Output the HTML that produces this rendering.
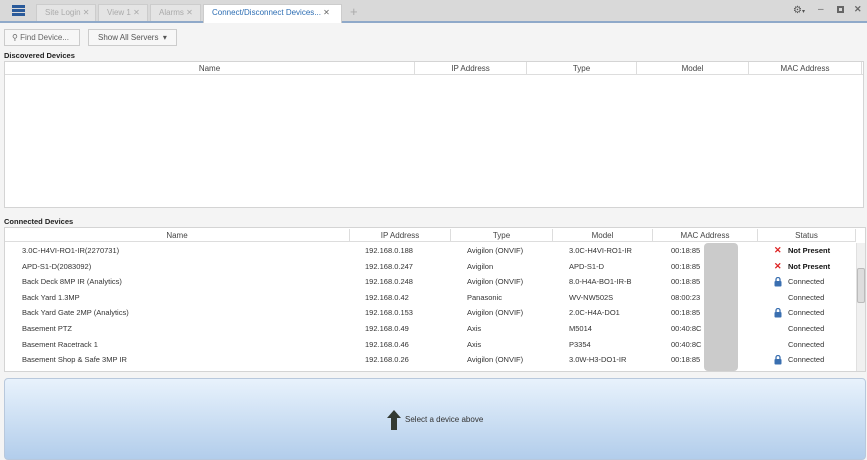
<!DOCTYPE html>
<html><head><meta charset="utf-8"><style>
*{margin:0;padding:0;box-sizing:border-box}
body{width:867px;height:460px;overflow:hidden;background:#f4f4f4;font-family:"Liberation Sans",sans-serif;font-size:8px;color:#333;position:relative}
.a{position:absolute;white-space:nowrap}
.tab{position:absolute;top:4px;height:17px;background:#e4e4e4;border:1px solid #ccc;border-bottom:none;color:#aaa;font-size:8px;line-height:16px;padding-left:8px}
.hd{position:absolute;height:13px;background:#fff;border-bottom:1px solid #ddd}
.hc{position:absolute;top:0;height:13px;border-right:1px solid #ddd;text-align:center;line-height:13px;color:#444;font-size:8px}
.row{position:absolute;left:0;width:851px;height:15px;line-height:15px;font-size:7.5px;color:#333}
.row span{position:absolute}
.lk{position:absolute;left:769px;top:3px}
</style></head><body>
<div class="a" style="left:0;top:0;width:867px;height:21px;background:#d9d9d9"></div>
<div class="a" style="left:0;top:21px;width:867px;height:2px;background:#8fa9c9"></div>
<div class="a" style="left:12px;top:5px;width:13px;height:3px;background:#2a5a9a;box-shadow:0 4px 0 #2a5a9a,0 8px 0 #2a5a9a"></div>
<div class="tab" style="left:36px;width:60px">Site Login ✕</div>
<div class="tab" style="left:98px;width:50px">View 1 ✕</div>
<div class="tab" style="left:150px;width:51px">Alarms ✕</div>
<div class="tab" style="left:203px;width:139px;background:#fff;color:#2c6db3;height:19px">Connect/Disconnect Devices... <span style="color:#666">✕</span></div>
<div class="a" style="left:350px;top:4px;color:#aaa;font-size:13px">+</div>
<div class="a" style="left:793px;top:5px;font-size:10px;color:#555">⚙<span style="font-size:6px">▾</span></div>
<div class="a" style="left:818px;top:4px;font-size:10px;color:#666">–</div>
<div class="a" style="left:837px;top:6px;width:7px;height:7px;border:2px solid #666"></div>
<div class="a" style="left:854px;top:4px;font-size:9px;color:#666;font-weight:bold">✕</div>

<div class="a" style="left:4px;top:29px;width:76px;height:17px;border:1px solid #ccc;background:#f7f7f7;line-height:15px;padding-left:7px;color:#666">⚲ Find Device...</div>
<div class="a" style="left:88px;top:29px;width:89px;height:17px;border:1px solid #ccc;background:#f7f7f7;line-height:15px;padding-left:9px;color:#555">Show All Servers &nbsp;▾</div>
<div class="a" style="left:4px;top:51px;font-weight:bold;font-size:7.5px;color:#222">Discovered Devices</div>
<div class="a" style="left:4px;top:61px;width:860px;height:147px;background:#fff;border:1px solid #d4d4d4"></div>
<div class="hd" style="left:5px;top:62px;width:858px">
<div class="hc" style="left:0;width:410px">Name</div>
<div class="hc" style="left:410px;width:112px">IP Address</div>
<div class="hc" style="left:522px;width:110px">Type</div>
<div class="hc" style="left:632px;width:112px">Model</div>
<div class="hc" style="left:744px;width:113px">MAC Address</div></div>

<div class="a" style="left:4px;top:217px;font-weight:bold;font-size:7.5px;color:#222">Connected Devices</div>
<div class="a" style="left:4px;top:227px;width:862px;height:145px;background:#fff;border:1px solid #d4d4d4;overflow:hidden">
<div class="hd" style="left:0;top:1px;width:851px">
<div class="hc" style="left:0;width:345px">Name</div>
<div class="hc" style="left:345px;width:101px">IP Address</div>
<div class="hc" style="left:446px;width:102px">Type</div>
<div class="hc" style="left:548px;width:100px">Model</div>
<div class="hc" style="left:648px;width:105px">MAC Address</div>
<div class="hc" style="left:753px;width:98px">Status</div></div>
<div style="position:absolute;left:0;top:15px">
<div class="row" style="top:0"><span style="left:17px">3.0C-H4VI-RO1-IR(2270731)</span><span style="left:360px">192.168.0.188</span><span style="left:462px">Avigilon (ONVIF)</span><span style="left:564px">3.0C-H4VI-RO1-IR</span><span style="left:666px">00:18:85</span><span style="left:769px;color:#d22;font-weight:bold;font-size:9px">✕</span><span style="left:783px;font-weight:bold;color:#111">Not Present</span></div>
<div class="row" style="top:15.6px"><span style="left:17px">APD-S1-D(2083092)</span><span style="left:360px">192.168.0.247</span><span style="left:462px">Avigilon</span><span style="left:564px">APD-S1-D</span><span style="left:666px">00:18:85</span><span style="left:769px;color:#d22;font-weight:bold;font-size:9px">✕</span><span style="left:783px;font-weight:bold;color:#111">Not Present</span></div>
<div class="row" style="top:31.2px"><span style="left:17px">Back Deck 8MP IR (Analytics)</span><span style="left:360px">192.168.0.248</span><span style="left:462px">Avigilon (ONVIF)</span><span style="left:564px">8.0-H4A-BO1-IR-B</span><span style="left:666px">00:18:85</span><svg class="lk" width="8" height="10" viewBox="0 0 8 10"><path d="M2 4V2.5a2 2 0 0 1 4 0V4" fill="none" stroke="#3a6fb0" stroke-width="1.3"/><rect x="0.5" y="4" width="7" height="5.5" rx="1" fill="#3a6fb0"/></svg><span style="left:783px">Connected</span></div>
<div class="row" style="top:46.8px"><span style="left:17px">Back Yard 1.3MP</span><span style="left:360px">192.168.0.42</span><span style="left:462px">Panasonic</span><span style="left:564px">WV-NW502S</span><span style="left:666px">08:00:23</span><span style="left:783px">Connected</span></div>
<div class="row" style="top:62.4px"><span style="left:17px">Back Yard Gate 2MP (Analytics)</span><span style="left:360px">192.168.0.153</span><span style="left:462px">Avigilon (ONVIF)</span><span style="left:564px">2.0C-H4A-DO1</span><span style="left:666px">00:18:85</span><svg class="lk" width="8" height="10" viewBox="0 0 8 10"><path d="M2 4V2.5a2 2 0 0 1 4 0V4" fill="none" stroke="#3a6fb0" stroke-width="1.3"/><rect x="0.5" y="4" width="7" height="5.5" rx="1" fill="#3a6fb0"/></svg><span style="left:783px">Connected</span></div>
<div class="row" style="top:78px"><span style="left:17px">Basement PTZ</span><span style="left:360px">192.168.0.49</span><span style="left:462px">Axis</span><span style="left:564px">M5014</span><span style="left:666px">00:40:8C</span><span style="left:783px">Connected</span></div>
<div class="row" style="top:93.6px"><span style="left:17px">Basement Racetrack 1</span><span style="left:360px">192.168.0.46</span><span style="left:462px">Axis</span><span style="left:564px">P3354</span><span style="left:666px">00:40:8C</span><span style="left:783px">Connected</span></div>
<div class="row" style="top:109.2px"><span style="left:17px">Basement Shop &amp; Safe 3MP IR</span><span style="left:360px">192.168.0.26</span><span style="left:462px">Avigilon (ONVIF)</span><span style="left:564px">3.0W-H3-DO1-IR</span><span style="left:666px">00:18:85</span><svg class="lk" width="8" height="10" viewBox="0 0 8 10"><path d="M2 4V2.5a2 2 0 0 1 4 0V4" fill="none" stroke="#3a6fb0" stroke-width="1.3"/><rect x="0.5" y="4" width="7" height="5.5" rx="1" fill="#3a6fb0"/></svg><span style="left:783px">Connected</span></div>
<div class="row" style="top:124.8px;color:#999"><span style="left:17px">Exterior 3MP (Analytics)</span><span style="left:360px">192.168.0.157</span><span style="left:462px">Avigilon (ONVIF)</span><span style="left:564px">3.0C-H4A-DA-IR-B</span><span style="left:666px">00:18:85:00:00:00</span><span style="left:783px">Connected</span></div>
</div>
<div class="a" style="left:699px;top:15px;width:34px;height:128px;background:#cbcbcb;border-radius:4px"></div>
<div class="a" style="left:851px;top:15px;width:10px;height:130px;background:#f0f0f0;border-left:1px solid #e0e0e0"></div>
<div class="a" style="left:852px;top:40px;width:8px;height:35px;background:#ddd;border:1px solid #bbb;border-radius:2px"></div>
</div>

<div class="a" style="left:4px;top:378px;width:862px;height:82px;border:1px solid #b8c8dc;border-radius:4px;background:linear-gradient(#e8f2fc,#b2cdeb)"></div>
<svg class="a" style="left:387px;top:410px" width="14" height="20" viewBox="0 0 14 20"><path d="M7 0 L14 8 L10 8 L10 20 L4 20 L4 8 L0 8 Z" fill="#333a33"/></svg>
<div class="a" style="left:405px;top:415px;font-size:8px;color:#333">Select a device above</div>
</body></html>
